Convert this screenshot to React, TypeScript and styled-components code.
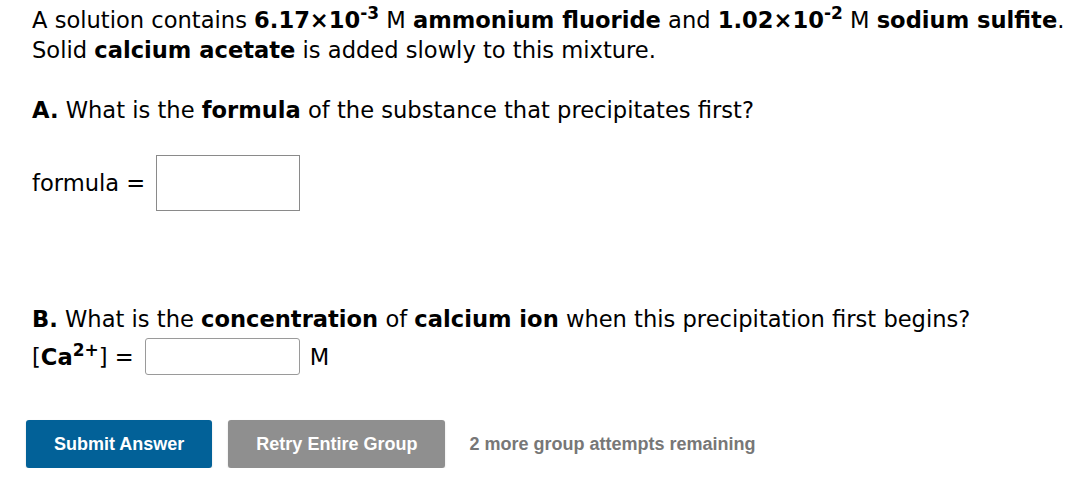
import styled, { createGlobalStyle } from 'styled-components';

const GlobalStyle = createGlobalStyle`
  html, body {
    margin: 0;
    padding: 0;
    background: #ffffff;
  }
`

const Page = styled.div`
  padding: 5px 0 0 32px;
  font-family: "DejaVu Sans", Verdana, sans-serif;
  font-size: 22.6px;
  line-height: 30px;
  color: #000;
`

const Para = styled.p<{ $top?: number; $gap?: number }>`
  margin: ${p => p.$top ?? 0}px 0 ${p => p.$gap ?? 0}px 0;
  white-space: nowrap;
`

const Sup = styled.sup`
  font-size: 17px;
  line-height: 0;
  vertical-align: 9px;
`

const AnswerRow = styled.div<{ $top: number }>`
  display: flex;
  align-items: center;
  margin-top: ${p => p.$top}px;
`

const Label = styled.span`
  margin-right: 11px;
`

const FormulaBox = styled.input`
  width: 144px;
  height: 56px;
  box-sizing: border-box;
  border: 1px solid #8a8a8a;
  border-radius: 0;
  background: #fff;
`

const ValueBox = styled.input`
  width: 155px;
  height: 37px;
  box-sizing: border-box;
  border: 1px solid #9a9a9a;
  border-radius: 3px;
  background: #fff;
`

const Unit = styled.span`
  margin-left: 10px;
`

const Actions = styled.div`
  display: flex;
  align-items: center;
  gap: 16px;
  margin-top: 45px;
  margin-left: -6px;
  font-family: "Liberation Sans", Arial, sans-serif;
  font-weight: bold;
  font-size: 18px;
`

const Button = styled.button<{ $primary?: boolean }>`
  height: 48px;
  padding: 0 28px;
  border: none;
  border-radius: 3px;
  background: ${p => (p.$primary ? '#026198' : '#8f8f8f')};
  color: #fff;
  font: inherit;
  box-shadow: 0 1px 2px rgba(0, 0, 0, 0.15);
`

const Remaining = styled.span`
  margin-left: 8px;
  color: #777;
`

export default function App() {
  return (
    <>
      <GlobalStyle />
      <Page>
        <Para>
          A solution contains <b>6.17×10<Sup>-3</Sup></b> M <b>ammonium fluoride</b> and{' '}
          <b>1.02×10<Sup>-2</Sup></b> M <b>sodium sulfite</b>.
        </Para>
        <Para $gap={30}>
          Solid <b>calcium acetate</b> is added slowly to this mixture.
        </Para>
        <Para>
          <b>A.</b> What is the <b>formula</b> of the substance that precipitates first?
        </Para>
        <AnswerRow $top={30}>
          <Label>formula =</Label>
          <FormulaBox type="text" />
        </AnswerRow>
        <Para $top={93}>
          <b>B.</b> What is the <b>concentration</b> of <b>calcium ion</b> when this precipitation first begins?
        </Para>
        <AnswerRow $top={4}>
          <Label>
            [<b>Ca<Sup>2+</Sup></b>] =
          </Label>
          <ValueBox type="text" />
          <Unit>M</Unit>
        </AnswerRow>
        <Actions>
          <Button $primary>Submit Answer</Button>
          <Button>Retry Entire Group</Button>
          <Remaining>2 more group attempts remaining</Remaining>
        </Actions>
      </Page>
    </>
  )
}
